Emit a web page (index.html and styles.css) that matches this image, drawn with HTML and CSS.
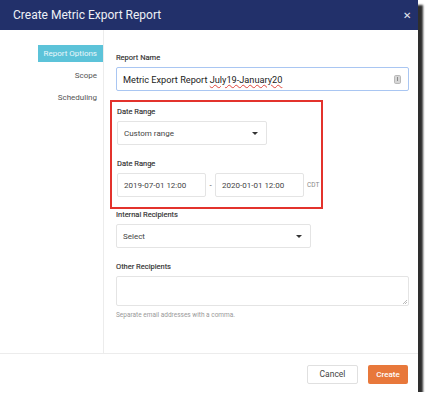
FILE: index.html
```html
<!DOCTYPE html>
<html>
<head>
<meta charset="utf-8">
<link rel="stylesheet" href="styles.css">
</head>
<body>
<div class="dialog">
  <div class="header">
    <span class="title">Create Metric Export Report</span>
    <span class="close">&#x2715;</span>
  </div>
  <div class="body">
    <div class="sidebar">
      <div class="nav active">Report Options</div>
      <div class="nav">Scope</div>
      <div class="nav">Scheduling</div>
    </div>
    <div class="content">
      <div class="label">Report Name</div>
      <div class="input name">
        <span class="val">Metric Export Report <span class="sp">July19-January20</span></span>
        <svg class="kicon" width="7" height="9" viewBox="0 0 7 9"><rect x="0.5" y="0.5" width="6" height="8" rx="1.2" fill="#d6d6d6" stroke="#b9b9b9"/><rect x="3" y="2" width="1" height="4" fill="#8a8a8a"/></svg>
      </div>
      <div class="highlight">
        <div class="label">Date Range</div>
        <div class="input select range">
          <span class="val">Custom range</span>
          <span class="caret"></span>
        </div>
        <div class="label second">Date Range</div>
        <div class="dates">
          <div class="input date"><span class="val">2019-07-01 12:00</span></div>
          <span class="dash">-</span>
          <div class="input date"><span class="val">2020-01-01 12:00</span></div>
          <span class="tz">CDT</span>
        </div>
      </div>
      <div class="label ir">Internal Recipients</div>
      <div class="input select recip">
        <span class="val">Select</span>
        <span class="caret"></span>
      </div>
      <div class="label second">Other Recipients</div>
      <div class="textarea">
        <svg class="grip" width="5" height="5" viewBox="0 0 5 5"><path d="M1 5L5 1M3 5L5 3" stroke="#aaa" stroke-width="0.8"/></svg>
      </div>
      <div class="help">Separate email addresses with a comma.</div>
    </div>
  </div>
  <div class="footer">
    <div class="btn cancel">Cancel</div>
    <div class="btn create">Create</div>
  </div>
</div>
</body>
</html>
```

FILE: styles.css
```css
html, body {
  margin: 0;
  padding: 0;
  background: #ffffff;
}
body {
  font-family: Roboto, "Liberation Sans", Arial, sans-serif;
  color: #444;
}
.dialog {
  width: 418px;
  height: 392px;
  background: #fff;
  box-shadow: 5px 5px 2px #2e2e2e;
  display: flex;
  flex-direction: column;
}
.header {
  height: 30px;
  background: #22306a;
  display: flex;
  align-items: center;
  justify-content: space-between;
  padding: 0 5px 0 13px;
  flex: none;
}
.title {
  color: #eef0f6;
  font-size: 12px;
}
.close {
  color: #e6e8f0;
  font-size: 10px;
  width: 10px;
}
.body {
  flex: 1;
  display: flex;
  min-height: 0;
}
.sidebar {
  width: 103px;
  border-right: 1px solid #ececec;
  padding-top: 15px;
  display: flex;
  flex-direction: column;
  align-items: flex-end;
  gap: 5px;
  flex: none;
}
.nav {
  font-size: 8px;
  line-height: 17px;
  height: 17px;
  padding: 0 6px;
  color: #555;
  white-space: nowrap;
}
.active {
  background: #5cc3d9;
  color: #ecf8fb;
  padding: 0 6px 0 6px;
  min-width: 52px;
  text-align: right;
}
.content {
  flex: 1;
  padding: 23px 9px 0 12px;
}
.label {
  font-size: 7.5px;
  line-height: 10px;
  height: 10px;
  color: #333;
  font-weight: 400;
  margin-bottom: 4px;
  -webkit-text-stroke: 0.15px #333;
}
.label.second {
  margin-top: 14px;
}
.label.ir {
  margin-top: 1px;
}
.input {
  box-sizing: border-box;
  height: 24px;
  border: 1px solid #e4e4e4;
  border-radius: 2px;
  display: flex;
  align-items: center;
  padding: 0 6px;
  position: relative;
}
.input .val {
  font-size: 8px;
  color: #444;
}
.name {
  border-color: #a9c6f2;
  justify-content: space-between;
  padding: 0 6px 0 6px;
}
.name .val {
  font-size: 9.2px;
  color: #222;
}
.sp {
  text-decoration: underline wavy #e0463c;
  text-decoration-thickness: 0.6px;
  text-underline-offset: 1px;
}
.kicon {
  margin-right: 1px;
}
.highlight {
  margin: 9px 0 0 -6px;
  width: 213px;
  box-sizing: border-box;
  border: 2px solid #e3322c;
  padding: 5px 0 10px 5px;
}
.select {
  justify-content: space-between;
}
.range {
  width: 150px;
}
.recip {
  width: 195px;
}
.caret {
  width: 0;
  height: 0;
  border-left: 3px solid transparent;
  border-right: 3px solid transparent;
  border-top: 3px solid #333;
  margin-right: 2px;
}
.dates {
  display: flex;
  align-items: center;
}
.date {
  width: 89px;
}
.dash {
  width: 9px;
  text-align: center;
  font-size: 8px;
  color: #555;
}
.tz {
  font-size: 6.5px;
  color: #888;
  margin-left: 3px;
}
.textarea {
  box-sizing: border-box;
  height: 30px;
  border: 1px solid #e4e4e4;
  border-radius: 2px;
  position: relative;
}
.grip {
  position: absolute;
  right: 1px;
  bottom: 1px;
}
.help {
  font-size: 6.5px;
  color: #999;
  margin-top: 5px;
}
.footer {
  height: 39px;
  border-top: 1px solid #ececec;
  box-sizing: border-box;
  display: flex;
  justify-content: flex-end;
  align-items: center;
  padding: 2px 10px 0 0;
  gap: 10px;
  flex: none;
}
.btn {
  box-sizing: border-box;
  height: 19px;
  border-radius: 2px;
  display: flex;
  align-items: center;
  justify-content: center;
  font-size: 8.5px;
}
.cancel {
  width: 51px;
  border: 1px solid #e0e0e0;
  color: #444;
}
.create {
  width: 40px;
  background: #e8783b;
  color: #fff;
  font-weight: 500;
  font-size: 8px;
}
```
